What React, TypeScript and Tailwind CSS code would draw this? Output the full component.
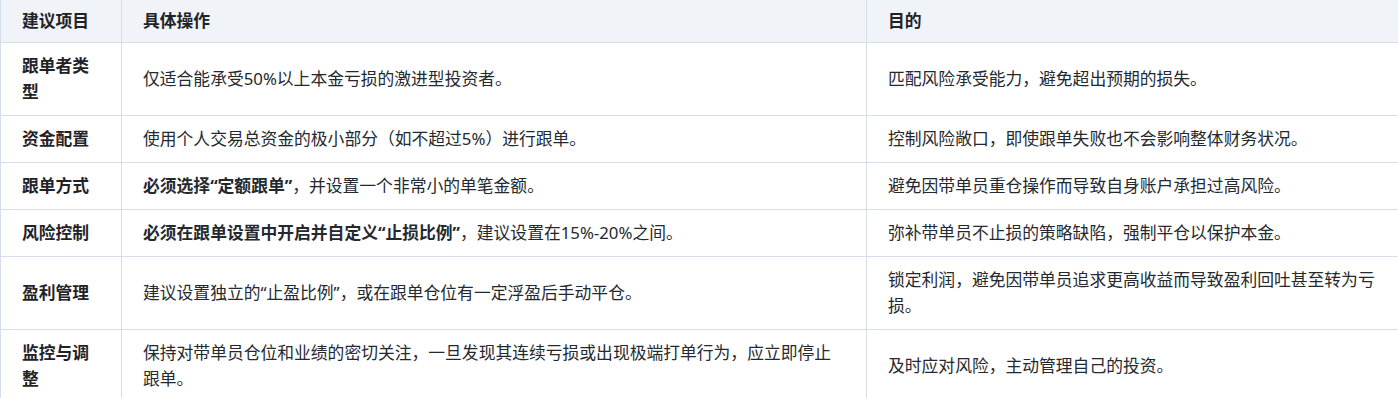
import React from "react";

type Row = {
  item: string;
  action: React.ReactNode;
  purpose: string;
};

const rows: Row[] = [
  {
    item: "跟单者类型",
    action: "仅适合能承受50%以上本金亏损的激进型投资者。",
    purpose: "匹配风险承受能力，避免超出预期的损失。",
  },
  {
    item: "资金配置",
    action: "使用个人交易总资金的极小部分（如不超过5%）进行跟单。",
    purpose: "控制风险敞口，即使跟单失败也不会影响整体财务状况。",
  },
  {
    item: "跟单方式",
    action: (
      <>
        <strong className="font-bold">必须选择“定额跟单”</strong>，并设置一个非常小的单笔金额。
      </>
    ),
    purpose: "避免因带单员重仓操作而导致自身账户承担过高风险。",
  },
  {
    item: "风险控制",
    action: (
      <>
        <strong className="font-bold">必须在跟单设置中开启并自定义“止损比例”</strong>，建议设置在15%-20%之间。
      </>
    ),
    purpose: "弥补带单员不止损的策略缺陷，强制平仓以保护本金。",
  },
  {
    item: "盈利管理",
    action: "建议设置独立的“止盈比例”，或在跟单仓位有一定浮盈后手动平仓。",
    purpose: "锁定利润，避免因带单员追求更高收益而导致盈利回吐甚至转为亏损。",
  },
  {
    item: "监控与调整",
    action: "保持对带单员仓位和业绩的密切关注，一旦发现其连续亏损或出现极端打单行为，应立即停止跟单。",
    purpose: "及时应对风险，主动管理自己的投资。",
  },
];

const cell = "border-l border-b border-[#d5dde8] px-[21px] align-middle text-left";

export default function App() {
  return (
    <div className="h-[398px] w-[1398px] overflow-hidden bg-white font-['Noto_Sans','Noto_Sans_CJK_SC',sans-serif] text-[16.8px] leading-[26px] text-[#24292f]">
      <table className="w-[1398px] table-fixed border-separate border-spacing-0">
        <colgroup>
          <col className="w-[121px]" />
          <col className="w-[745px]" />
          <col className="w-[532px]" />
        </colgroup>
        <thead>
          <tr className="bg-[#f0f3f8]">
            <th className={`${cell} py-[8px] font-bold text-[#1f2328]`}>建议项目</th>
            <th className={`${cell} py-[8px] font-bold text-[#1f2328]`}>具体操作</th>
            <th className={`${cell} py-[8px] font-bold text-[#1f2328]`}>目的</th>
          </tr>
        </thead>
        <tbody>
          {rows.map((r) => (
            <tr key={r.item}>
              <td className={`${cell} py-[10px] font-bold text-[#1f2328]`}>{r.item}</td>
              <td className={`${cell} py-[10px]`}>{r.action}</td>
              <td className={`${cell} py-[10px]`}>{r.purpose}</td>
            </tr>
          ))}
        </tbody>
      </table>
    </div>
  );
}
